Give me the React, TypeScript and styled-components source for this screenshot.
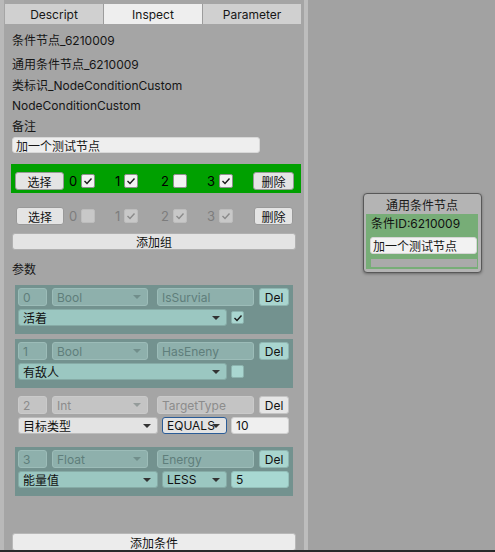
import React from 'react'
import styled, { createGlobalStyle, css } from 'styled-components'

const GlobalStyle = createGlobalStyle`
  html, body {
    margin: 0;
    padding: 0;
    background: #a2a2a2;
  }
  body {
    font-family: Inter, "Noto Sans CJK SC", sans-serif;
    font-size: 12px;
    color: #161616;
  }
  * {
    box-sizing: border-box;
  }
`

const Root = styled.div`
  width: 495px;
  height: 552px;
  display: flex;
  flex-direction: column;
  overflow: hidden;
`

const Main = styled.div`
  flex: 1;
  display: flex;
  min-height: 0;
`

const BottomEdge = styled.div`
  height: 2px;
  background: #2a2a2a;
`

const Panel = styled.div`
  width: 308px;
  flex-shrink: 0;
  background: #a5a5a5;
  border-left: 4px solid #b9b9b9;
  border-right: 4px solid #bdbdbd;
  padding-top: 4px;
  overflow: hidden;
`

const Tabs = styled.div`
  display: flex;
  margin: 0 3px 0 1px;
  height: 20px;
`

const Tab = styled.div<{ $active?: boolean }>`
  flex: 1;
  display: flex;
  align-items: center;
  justify-content: center;
  background: ${p => (p.$active ? '#eeeeee' : '#d0d0d0')};
  border-right: 1px solid #9c9c9c;
  &:last-child {
    border-right: none;
  }
`

const Info = styled.div`
  padding: 7px 0 0 8px;
`

const Line = styled.div<{ $gap?: number }>`
  line-height: 20px;
  height: 20px;
  margin-top: ${p => p.$gap ?? 0}px;
  white-space: nowrap;
`

const fieldBase = css`
  height: 17px;
  border-radius: 3px;
  display: flex;
  align-items: center;
  padding: 0 4px;
  white-space: nowrap;
  overflow: hidden;
`

const Remark = styled.div`
  ${fieldBase};
  width: 248px;
  height: 16px;
  background: #eeeeee;
  border: 1px solid #d8d8d8;
  padding: 0 3px;
`

const GroupRow = styled.div<{ $selected?: boolean }>`
  display: flex;
  align-items: center;
  margin: ${p => (p.$selected ? '11px 3px 0 7px' : '6px 3px 0 7px')};
  height: 29px;
  padding: 5px 8px 0 ${p => (p.$selected ? 4 : 5)}px;
  background: ${p => (p.$selected ? '#00a000' : 'transparent')};
`

const Button = styled.div<{ $w?: number }>`
  height: 18px;
  width: ${p => (p.$w ? `${p.$w}px` : 'auto')};
  display: flex;
  align-items: center;
  justify-content: center;
  background: #e4e4e4;
  border: 1px solid #999999;
  border-radius: 3px;
  color: #111;
  flex-shrink: 0;
`

const Slots = styled.div`
  display: flex;
  margin-left: 5px;
`

const SlotGroup = styled.div<{ $disabled?: boolean }>`
  width: 46px;
  display: flex;
  align-items: center;
  gap: 4px;
  color: ${p => (p.$disabled ? '#7d7d7d' : '#000')};
  font-size: 13px;
`

const Push = styled.div`
  margin-left: auto;
`

const BoxWrap = styled.div<{ $size: number; $tone: 'light' | 'dim' | 'teal' }>`
  width: ${p => p.$size}px;
  height: ${p => p.$size}px;
  flex-shrink: 0;
  border-radius: 2px;
  display: flex;
  align-items: center;
  justify-content: center;
  ${p =>
    p.$tone === 'light' &&
    css`
      background: #f2f2f2;
      border: 1px solid #8f8f8f;
    `}
  ${p =>
    p.$tone === 'dim' &&
    css`
      background: #c8c8c8;
      border: 1px solid #bdbdbd;
    `}
  ${p =>
    p.$tone === 'teal' &&
    css`
      background: #a9d6d0;
      border: 1px solid #8cb3ae;
    `}
`

const Check = ({
  on,
  size = 14,
  tone = 'light',
}: {
  on: boolean
  size?: number
  tone?: 'light' | 'dim' | 'teal'
}) => (
  <BoxWrap $size={size} $tone={tone}>
    {on && (
      <svg width="10" height="10" viewBox="0 0 10 10">
        <polyline
          points="1.5,5 4,7.5 8.5,2.5"
          fill="none"
          stroke={tone === 'dim' ? '#8a8a8a' : '#1a1a1a'}
          strokeWidth="1.4"
        />
      </svg>
    )}
  </BoxWrap>
)

const WideButton = styled(Button)`
  margin: 5px 8px 0 8px;
  height: 17px;
  border-color: #b0b0b0;
`

const SectionTitle = styled.div`
  margin: 10px 0 0 8px;
  line-height: 20px;
`

const ParamList = styled.div`
  display: flex;
  flex-direction: column;
  gap: 5px;
  margin: 5px 11px 0 11px;
`

const ParamBlock = styled.div<{ $teal?: boolean }>`
  width: 278px;
  height: 49px;
  padding: 3px 4px 0 3px;
  background: ${p => (p.$teal ? '#73928f' : 'transparent')};
  display: flex;
  flex-direction: column;
  gap: 3px;
`

const Row = styled.div`
  display: flex;
  align-items: center;
`

const DisabledField = styled.div<{ $w: number; $teal?: boolean; $ml?: number }>`
  ${fieldBase};
  height: 18px;
  width: ${p => p.$w}px;
  margin-left: ${p => p.$ml ?? 0}px;
  position: relative;
  background: ${p => (p.$teal ? '#8eb0ac' : '#c4c4c4')};
  border: 1px solid ${p => (p.$teal ? '#9cbcb8' : '#cacaca')};
  color: ${p => (p.$teal ? '#5f7e7b' : '#8c8c8c')};
`

const Arrow = styled.span<{ $dim?: boolean }>`
  position: absolute;
  right: 6px;
  top: 50%;
  margin-top: -2px;
  width: 0;
  height: 0;
  border-left: 4px solid transparent;
  border-right: 4px solid transparent;
  border-top: 4px solid ${p => (p.$dim ? 'rgba(60,80,78,0.35)' : '#333')};
`

const DelButton = styled(Button)<{ $teal?: boolean }>`
  width: 30px;
  height: 18px;
  margin-left: 5px;
  background: ${p => (p.$teal ? '#a9d5cf' : '#e6e6e6')};
  border-color: ${p => (p.$teal ? '#8fb6b1' : '#c4c4c4')};
`

const Dropdown = styled.div<{ $w: number; $teal?: boolean; $focus?: boolean; $ml?: number }>`
  ${fieldBase};
  position: relative;
  width: ${p => p.$w}px;
  margin-left: ${p => p.$ml ?? 0}px;
  padding-right: 16px;
  background: ${p => (p.$teal ? '#9bc7c1' : '#e3e3e3')};
  border: 1px solid ${p => (p.$focus ? '#2b5c97' : p.$teal ? '#86aba6' : '#bcbcbc')};
  color: #111;
`

const ValueInput = styled.div<{ $teal?: boolean }>`
  ${fieldBase};
  width: 58px;
  margin-left: 4px;
  background: ${p => (p.$teal ? '#a8d8d2' : '#efefef')};
  border: 1px solid ${p => (p.$teal ? '#94c0ba' : '#d0d0d0')};
  color: #111;
`

const CheckSlot = styled.div`
  margin-left: 4px;
`

const AddCondition = styled(Button)`
  margin: 37px 8px 0 8px;
  border-color: #b8b8b8;
  background: #ececec;
`

const Canvas = styled.div`
  flex: 1;
  position: relative;
  background: #a2a2a2;
`

const Node = styled.div`
  position: absolute;
  left: 55px;
  top: 193px;
  width: 119px;
  height: 80px;
  background: #b4b4b4;
  border: 1px solid #585858;
  border-radius: 4px;
  box-shadow: 0 1px 3px rgba(0, 0, 0, 0.35);
  display: flex;
  flex-direction: column;
  padding: 0 3px 3px 2px;
`

const NodeTitle = styled.div`
  height: 20px;
  display: flex;
  align-items: center;
  justify-content: center;
  color: #1a1a1a;
`

const NodeBody = styled.div`
  flex: 1;
  background: #77ad77;
  padding: 0 1px 0 4px;
  display: flex;
  flex-direction: column;
`

const NodeLabel = styled.div`
  line-height: 20px;
  padding-left: 1px;
  color: #111;
`

const NodeInput = styled.div`
  ${fieldBase};
  margin-top: 3px;
  height: 17px;
  background: #f2f2f2;
  border: 1px solid #d6d6d6;
  padding: 0 2px;
`

const NodeBar = styled.div`
  margin: 5px 0 0 1px;
  height: 8px;
  background: #aaaaaa;
`

type Param = {
  index: number
  type: string
  name: string
  label: string
  teal: boolean
  kind: 'bool' | 'compare'
  checked?: boolean
  op?: string
  value?: string
  focus?: boolean
}

const params: Param[] = [
  { index: 0, type: 'Bool', name: 'IsSurvial', label: '活着', teal: true, kind: 'bool', checked: true },
  { index: 1, type: 'Bool', name: 'HasEneny', label: '有敌人', teal: true, kind: 'bool', checked: false },
  { index: 2, type: 'Int', name: 'TargetType', label: '目标类型', teal: false, kind: 'compare', op: 'EQUALS', value: '10', focus: true },
  { index: 3, type: 'Float', name: 'Energy', label: '能量值', teal: true, kind: 'compare', op: 'LESS', value: '5' },
]

const ParamRow = ({ p }: { p: Param }) => (
  <ParamBlock $teal={p.teal}>
    <Row>
      <DisabledField $w={29} $teal={p.teal}>{p.index}</DisabledField>
      <DisabledField $w={96} $ml={5} $teal={p.teal}>
        {p.type}
        <Arrow $dim />
      </DisabledField>
      <DisabledField $w={97} $ml={9} $teal={p.teal}>{p.name}</DisabledField>
      <DelButton $teal={p.teal}>Del</DelButton>
    </Row>
    <Row>
      {p.kind === 'bool' ? (
        <>
          <Dropdown $w={209} $teal={p.teal}>
            {p.label}
            <Arrow />
          </Dropdown>
          <CheckSlot>
            <Check on={!!p.checked} size={13} tone="teal" />
          </CheckSlot>
        </>
      ) : (
        <>
          <Dropdown $w={140} $teal={p.teal}>
            {p.label}
            <Arrow />
          </Dropdown>
          <Dropdown $w={65} $ml={4} $teal={p.teal} $focus={p.focus}>
            {p.op}
            <Arrow />
          </Dropdown>
          <ValueInput $teal={p.teal}>{p.value}</ValueInput>
        </>
      )}
    </Row>
  </ParamBlock>
)

const groups = [
  { selected: true, slots: [true, true, false, true] },
  { selected: false, slots: [false, true, true, true] },
]

export default function App() {
  return (
    <Root>
      <GlobalStyle />
      <Main>
        <Panel>
          <Tabs>
            <Tab>Descript</Tab>
            <Tab $active>Inspect</Tab>
            <Tab>Parameter</Tab>
          </Tabs>
          <Info>
            <Line>条件节点_6210009</Line>
            <Line $gap={4}>通用条件节点_6210009</Line>
            <Line $gap={1}>类标识_NodeConditionCustom</Line>
            <Line>NodeConditionCustom</Line>
            <Line $gap={1}>备注</Line>
            <Remark>加一个测试节点</Remark>
          </Info>
          {groups.map((g, gi) => (
            <GroupRow key={gi} $selected={g.selected}>
              <Button $w={g.selected ? 49 : 48}>选择</Button>
              <Slots>
                {g.slots.map((on, i) => {
                  const disabled = !g.selected
                  return (
                    <SlotGroup key={i} $disabled={disabled}>
                      {i}
                      <Check on={on} tone={disabled ? 'dim' : 'light'} />
                    </SlotGroup>
                  )
                })}
              </Slots>
              <Push>
                <Button $w={g.selected ? 41 : 39}>删除</Button>
              </Push>
            </GroupRow>
          ))}
          <WideButton>添加组</WideButton>
          <SectionTitle>参数</SectionTitle>
          <ParamList>
            {params.map(p => (
              <ParamRow key={p.index} p={p} />
            ))}
          </ParamList>
          <AddCondition>添加条件</AddCondition>
        </Panel>
        <Canvas>
          <Node>
            <NodeTitle>通用条件节点</NodeTitle>
            <NodeBody>
              <NodeLabel>条件ID:6210009</NodeLabel>
              <NodeInput>加一个测试节点</NodeInput>
              <NodeBar />
            </NodeBody>
          </Node>
        </Canvas>
      </Main>
      <BottomEdge />
    </Root>
  )
}
